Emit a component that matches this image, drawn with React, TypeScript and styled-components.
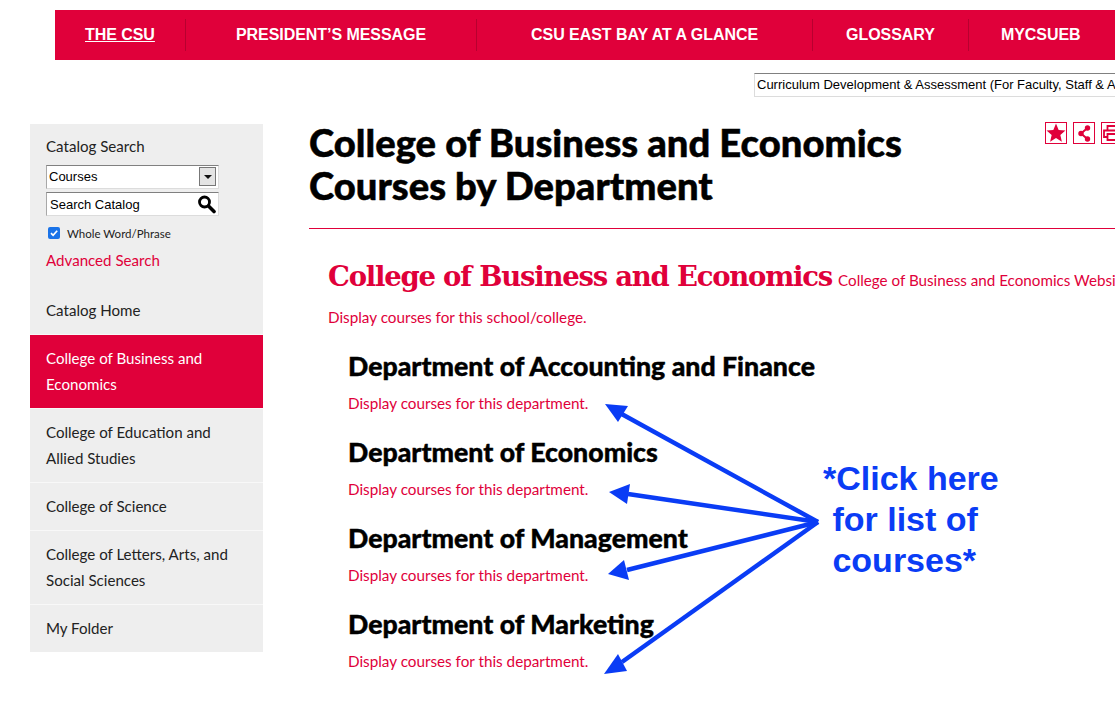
import React from "react";
import styled, { createGlobalStyle } from "styled-components";

const RED = "#e0003a";
const BLUE = "#0a3cf5";
const SANS = `Lato, "Noto Sans", sans-serif`;

const Global = createGlobalStyle`
  html, body { margin: 0; padding: 0; background: #fff; overflow: hidden; }
  body { font-family: ${SANS}; width: 1115px; height: 703px; }
  #root { width: 1115px; height: 703px; overflow: hidden; }
`;

const Page = styled.div`
  position: relative;
  width: 1115px;
  height: 703px;
  overflow: hidden;
  padding-top: 10px;
  box-sizing: border-box;
`;

const Nav = styled.nav`
  display: flex;
  align-items: center;
  margin-left: 55px;
  width: 1100px;
  height: 50px;
  background: ${RED};
`;

const NavItem = styled.a<{ $left: number; $right: number; $sep?: boolean; $current?: boolean }>`
  display: flex;
  align-items: center;
  height: 32px;
  padding: 0 ${(p) => p.$right}px 0 ${(p) => p.$left}px;
  box-sizing: border-box;
  border-right: ${(p) => (p.$sep ? "1px solid #b8002f" : "none")};
  color: #fff;
  font: bold 16px "Liberation Sans", Arial, sans-serif;
  letter-spacing: -0.05px;
  white-space: nowrap;
  text-decoration: ${(p) => (p.$current ? "underline" : "none")};
`;

const CatalogBar = styled.div`
  display: flex;
  margin: 13px 0 0 754px;
  width: 361px;
  height: 24px;
  box-sizing: border-box;
  padding: 0 0 2px 2px;
  align-items: center;
  border: 1px solid #dcdcdc;
  border-top-color: #808080;
  border-right: none;
  font: 13px "Liberation Sans", Arial, sans-serif;
  color: #000;
  white-space: nowrap;
  overflow: hidden;
`;

const Columns = styled.div`
  display: flex;
  margin: 27px 0 0 30px;
  align-items: flex-start;
`;

const Sidebar = styled.aside`
  flex: 0 0 233px;
  background: #eeeeee;
  font-size: 15.1px;
  color: #222;
`;

const SearchBox = styled.div`
  display: flex;
  flex-direction: column;
  padding: 12px 16px 0;
  height: 163px;
  box-sizing: border-box;
`;

const SearchTitle = styled.div`
  line-height: 20px;
  margin-bottom: 9px;
`;

const FieldBox = styled.div<{ $lift?: boolean }>`
  display: flex;
  align-items: center;
  justify-content: space-between;
  width: 173px;
  height: 24px;
  box-sizing: border-box;
  background: #fff;
  border: 1px solid #dcdcdc;
  border-top-color: #808080;
  border-left-color: #a8a8a8;
  padding: 0 2px ${(p) => (p.$lift ? "1px" : "0")};
  margin-bottom: 3px;
  font: 13px "Liberation Sans", Arial, sans-serif;
  color: #000;
`;

const SearchText = styled.span`
  padding-left: 1px;
`;

const SelectButton = styled.span`
  display: flex;
  align-items: center;
  justify-content: center;
  width: 17px;
  height: 19px;
  box-sizing: border-box;
  background: #e4e4e4;
  border: 1px solid #777;
`;

const Caret = styled.span`
  width: 0;
  height: 0;
  border-left: 4px solid transparent;
  border-right: 4px solid transparent;
  border-top: 4px solid #111;
`;

const CheckRow = styled.div`
  display: flex;
  align-items: center;
  height: 14px;
  margin: 7px 0 0 2px;
  font-size: 11.5px;
  color: #222;
`;

const CheckMark = styled.span`
  display: flex;
  align-items: center;
  justify-content: center;
  width: 12px;
  height: 12px;
  border-radius: 2px;
  background: #1a73e8;
  margin-right: 7px;
`;

const Advanced = styled.a`
  color: ${RED};
  line-height: 20px;
  margin-top: 10px;
`;

const SideItem = styled.a<{ $active?: boolean }>`
  display: block;
  padding: 10px 16px 11px;
  line-height: 26px;
  background: ${(p) => (p.$active ? RED : "transparent")};
  color: ${(p) => (p.$active ? "#fff" : "#222")};
  border-bottom: 1px solid #f8f8f8;
  &:last-child { border-bottom: none; }
`;

const Main = styled.main`
  position: relative;
  flex: 0 0 806px;
  margin: -3px 0 0 46px;
  width: 806px;
  white-space: nowrap;
`;

const TitleRow = styled.header`
  position: relative;
  height: 107px;
  border-bottom: 1px solid ${RED};
`;

const Title = styled.h1`
  margin: 0;
  font-size: 38.2px;
  line-height: 43px;
  font-weight: 900;
  -webkit-text-stroke: 0.5px #000;
  color: #000;
`;

const Tools = styled.div`
  position: absolute;
  left: 736px;
  top: 1px;
  display: flex;
  gap: 6px;
`;

const ToolBox = styled.span`
  display: flex;
  align-items: center;
  justify-content: center;
  width: 22px;
  height: 22px;
  box-sizing: border-box;
  border: 1px solid ${RED};
  color: ${RED};
  background: #fff;
`;

const Section = styled.section`
  padding: 29px 0 0 19px;
`;

const CollegeRow = styled.div`
  display: flex;
  align-items: baseline;
  height: 40px;
`;

const CollegeName = styled.h2`
  margin: 0;
  font-family: "DejaVu Serif", "Liberation Serif", serif;
  font-size: 27.5px;
  font-weight: bold;
  line-height: 36px;
  letter-spacing: -1.23px;
  color: ${RED};
`;

const CollegeSite = styled.a`
  margin-left: 6px;
  font-size: 15.2px;
  color: ${RED};
`;

const RedLink = styled.a`
  display: block;
  font-size: 15.25px;
  line-height: 20px;
  color: ${RED};
`;

const SchoolLink = styled(RedLink)`
  margin-top: 9px;
`;

const DeptList = styled.div`
  padding: 22px 0 0 20px;
`;

const Dept = styled.div`
  height: 86px;
`;

const DeptName = styled.h3`
  margin: 0 0 10px;
  font-size: 26.7px;
  line-height: 34px;
  font-weight: 900;
  -webkit-text-stroke: 0.4px #000;
  color: #000;
`;

const Annotation = styled.svg`
  position: absolute;
  left: 0;
  top: 0;
  pointer-events: none;
`;

const Callout = styled.div`
  position: absolute;
  left: 823px;
  top: 458px;
  font: bold 34px/41px "Liberation Sans", Arial, sans-serif;
  color: ${BLUE};
  white-space: pre;
`;

const navItems = [
  { label: "THE CSU", left: 30, right: 30, sep: true, current: true },
  { label: "PRESIDENT’S MESSAGE", left: 50, right: 50, sep: true },
  { label: "CSU EAST BAY AT A GLANCE", left: 54, right: 54, sep: true },
  { label: "GLOSSARY", left: 33, right: 33, sep: true },
  { label: "MYCSUEB", left: 32, right: 32 },
];

const sideItems = [
  { label: "Catalog Home" },
  { label: "College of Business and Economics", active: true },
  { label: "College of Education and Allied Studies" },
  { label: "College of Science" },
  { label: "College of Letters, Arts, and Social Sciences" },
  { label: "My Folder" },
];

const departments = [
  "Department of Accounting and Finance",
  "Department of Economics",
  "Department of Management",
  "Department of Marketing",
];

const arrows = [
  { end: "618,412", head: "605,404 628,406 618,422" },
  { end: "628,494", head: "609,492 630,484 627,504" },
  { end: "627,570", head: "608,574 624,560 629,580" },
  { end: "622,662", head: "604,674 618,654 627,671" },
];

export default function App() {
  return (
    <Page>
      <Global />
      <Nav>
        {navItems.map((n) => (
          <NavItem key={n.label} $left={n.left} $right={n.right} $sep={n.sep} $current={n.current}>
            {n.label}
          </NavItem>
        ))}
      </Nav>
      <CatalogBar>Curriculum Development &amp; Assessment (For Faculty, Staff &amp; Administrators)</CatalogBar>
      <Columns>
        <Sidebar>
          <SearchBox>
            <SearchTitle>Catalog Search</SearchTitle>
            <FieldBox $lift>
              Courses
              <SelectButton><Caret /></SelectButton>
            </FieldBox>
            <FieldBox>
              <SearchText>Search Catalog</SearchText>
              <svg width="19" height="19" viewBox="0 0 19 19">
                <circle cx="7.500" cy="7" r="5" fill="none" stroke="#000" strokeWidth="2.800" />
                <path d="M11.500 11l5.500 5.500" stroke="#000" strokeWidth="3.600" strokeLinecap="round" />
              </svg>
            </FieldBox>
            <CheckRow>
              <CheckMark>
                <svg width="10" height="10" viewBox="0 0 10 10">
                  <path d="M2 5.200l2.100 2.100L8.200 2.800" fill="none" stroke="#fff" strokeWidth="1.700" />
                </svg>
              </CheckMark>
              Whole Word/Phrase
            </CheckRow>
            <Advanced>Advanced Search</Advanced>
          </SearchBox>
          {sideItems.map((s) => (
            <SideItem key={s.label} $active={s.active}>{s.label}</SideItem>
          ))}
        </Sidebar>
        <Main>
          <TitleRow>
            <Title>
              College of Business and Economics
              <br />
              Courses by Department
            </Title>
            <Tools>
              <ToolBox>
                <svg width="20" height="20" viewBox="0 0 18 18">
                  <path d="M9 .5l2.400 5.800 6.100.5-4.600 4 1.400 6L9 13.600l-5.300 3.200 1.400-6-4.600-4 6.100-.5z" fill="currentColor" />
                </svg>
              </ToolBox>
              <ToolBox>
                <svg width="14" height="17" viewBox="0 0 14 17">
                  <path d="M10.500 3L4 8.500l6.500 5.500" fill="none" stroke="currentColor" strokeWidth="2" />
                  <circle cx="10.500" cy="3" r="2.700" fill="currentColor" />
                  <circle cx="4" cy="8.500" r="2.700" fill="currentColor" />
                  <circle cx="10.500" cy="14" r="2.700" fill="currentColor" />
                </svg>
              </ToolBox>
              <ToolBox>
                <svg width="18" height="18" viewBox="0 0 18 18">
                  <path d="M4.500 6V2h9v4M4.500 13H1V6.500h16V13h-3.500M4.500 10h9v6h-9z" fill="none" stroke="currentColor" strokeWidth="1.800" />
                </svg>
              </ToolBox>
            </Tools>
          </TitleRow>
          <Section>
            <CollegeRow>
              <CollegeName>College of Business and Economics</CollegeName>
              <CollegeSite>College of Business and Economics Website</CollegeSite>
            </CollegeRow>
            <SchoolLink>Display courses for this school/college.</SchoolLink>
            <DeptList>
              {departments.map((d) => (
                <Dept key={d}>
                  <DeptName>{d}</DeptName>
                  <RedLink>Display courses for this department.</RedLink>
                </Dept>
              ))}
            </DeptList>
          </Section>
        </Main>
      </Columns>
      <Annotation width="1115" height="703" viewBox="0 0 1115 703">
        {arrows.map((a) => (
          <g key={a.head}>
            <polyline points={`818,522 ${a.end}`} fill="none" stroke={BLUE} strokeWidth="4.500" />
            <polygon points={a.head} fill={BLUE} />
          </g>
        ))}
      </Annotation>
      <Callout>{"*Click here\n for list of\n courses*"}</Callout>
    </Page>
  );
}
